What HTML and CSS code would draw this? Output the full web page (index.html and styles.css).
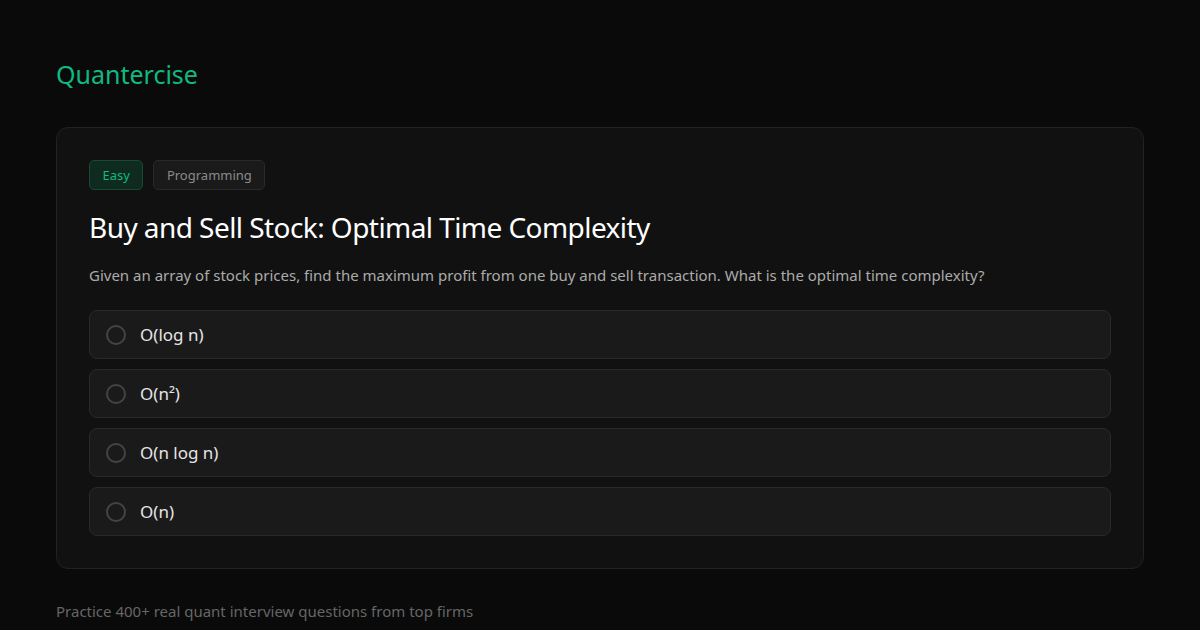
FILE: index.html
```html
<!DOCTYPE html>
<html lang="en">
<head>
<meta charset="utf-8">
<title>Quantercise</title>
<link rel="stylesheet" href="styles.css">
</head>
<body>
<main class="page">
  <div class="logo">Quantercise</div>
  <section class="card">
    <div class="tags">
      <span class="tag tag-easy">Easy</span>
      <span class="tag tag-topic">Programming</span>
    </div>
    <h1 class="title">Buy and Sell Stock: Optimal Time Complexity</h1>
    <p class="desc">Given an array of stock prices, find the maximum profit from one buy and sell transaction. What is the optimal time complexity?</p>
    <div class="options">
      <div class="option"><span class="radio"></span><span class="label">O(log n)</span></div>
      <div class="option"><span class="radio"></span><span class="label">O(n²)</span></div>
      <div class="option"><span class="radio"></span><span class="label">O(n log n)</span></div>
      <div class="option"><span class="radio"></span><span class="label">O(n)</span></div>
    </div>
  </section>
  <p class="footer">Practice 400+ real quant interview questions from top firms</p>
</main>
</body>
</html>
```
FILE: styles.css
```css
* { box-sizing: border-box; }
html, body { margin: 0; padding: 0; }
body {
  background: #0a0a0a;
  font-family: "Noto Sans", "Open Sans", sans-serif;
  color: #ededed;
  width: 1200px;
  height: 630px;
  overflow: hidden;
}
.page {
  padding: 56px 56px 0 56px;
  display: flex;
  flex-direction: column;
}
.logo {
  font-size: 25px;
  line-height: 32px;
  color: #10b981;
  margin: 2px 0 37px 0;
}
.card {
  background: #111111;
  border: 1px solid #222222;
  border-radius: 12px;
  padding: 32px;
  display: flex;
  flex-direction: column;
}
.tags {
  display: flex;
  gap: 10px;
}
.tag {
  height: 30px;
  display: inline-flex;
  align-items: center;
  padding: 0 12.5px;
  font-size: 13px;
  border-radius: 5px;
  border: 1px solid;
}
.tag-easy {
  background: #0f2a1f;
  border-color: #174a35;
  color: #10b981;
}
.tag-topic {
  background: #1a1a1a;
  border-color: #2a2a2a;
  color: #8a8a8a;
}
.title {
  margin: 19px 0 0 0;
  font-size: 28px;
  line-height: 36px;
  font-weight: 400;
  letter-spacing: -0.02em;
  color: #ffffff;
}
.desc {
  margin: 18.5px 0 0 0;
  font-size: 15px;
  line-height: 22px;
  color: #ababab;
}
.options {
  margin-top: 24.5px;
  display: flex;
  flex-direction: column;
  gap: 10px;
}
.option {
  height: 49px;
  background: #1a1a1a;
  border: 1px solid #2a2a2a;
  border-radius: 8px;
  display: flex;
  align-items: center;
  padding-left: 16px;
  gap: 14px;
}
.radio {
  width: 20px;
  height: 20px;
  border-radius: 50%;
  border: 2px solid #444444;
  flex: none;
}
.label {
  font-size: 17px;
  color: #e5e5e5;
}
.footer {
  margin: 31px 0 0 0;
  font-size: 15px;
  line-height: 22px;
  color: #666666;
}
```
